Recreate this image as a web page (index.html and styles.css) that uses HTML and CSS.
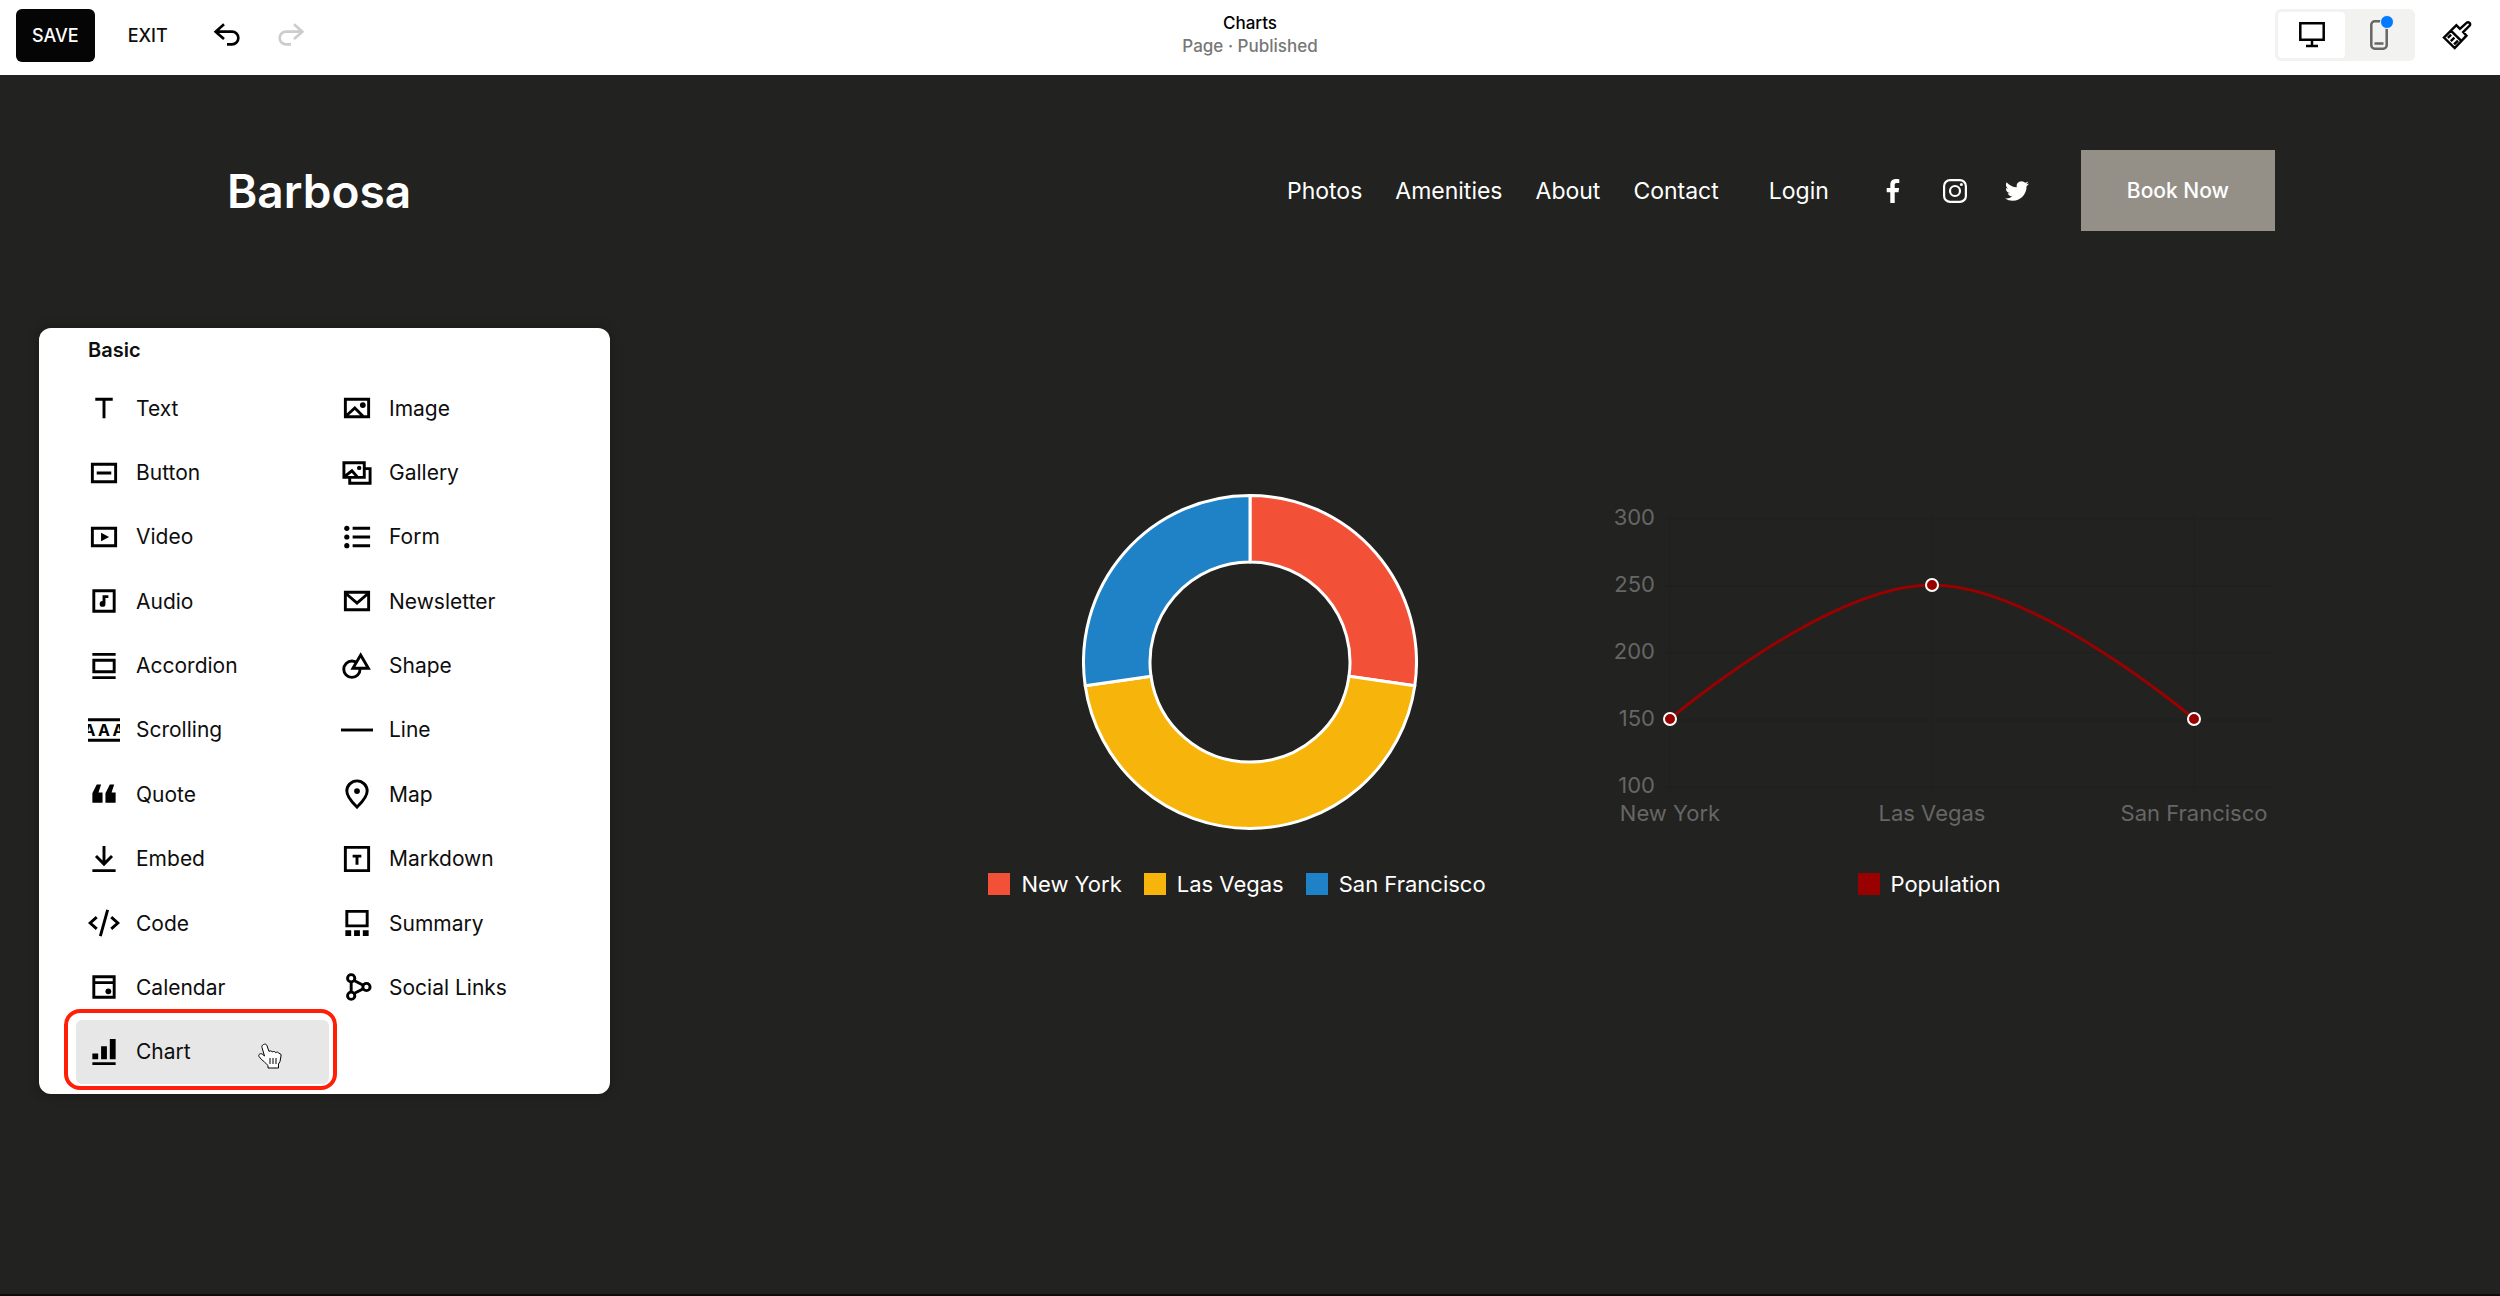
FILE: index.html
```html
<!DOCTYPE html>
<html lang="en">
<head>
    <meta charset="UTF-8">
    <meta name="viewport" content="width=device-width, initial-scale=1.0">
    <title>Charts</title>
    <link rel="stylesheet" href="styles.css">
</head>
<body>
    <div class="toolbar">
        <div class="toolbar-left">
            <button type="button" class="btn-save">SAVE</button>
            <button type="button" class="btn-exit">EXIT</button>
            <button type="button" class="btn-history" aria-label="Undo">
                <svg viewBox="638 70 84 70"><path d="M671 73L646 95L671 117M646 95H695a19 19 0 0 1 0 38H680"/></svg>
            </button>
            <button type="button" class="btn-history" aria-label="Redo" disabled>
                <svg viewBox="638 70 84 70"><path d="M689 73L714 95L689 117M714 95H665a19 19 0 0 0 0 38H680"/></svg>
            </button>
        </div>
        <div class="toolbar-title">
            <strong>Charts</strong>
            <span>Page · Published</span>
        </div>
        <div class="toolbar-right">
            <div class="device-toggle">
                <button type="button" class="device active" aria-label="Desktop view">
                    <svg width="26" height="26" viewBox="0 0 26 26" fill="none" stroke="#000" stroke-width="2.5"><path d="M1.3 1.3H24.7V17.7H1.3ZM13 18V23M7 24H19"/></svg>
                </button>
                <button type="button" class="device" aria-label="Mobile view">
                    <svg width="18" height="30" viewBox="0 0 18 30" fill="none" stroke="#666" stroke-width="2.5"><rect x="1.3" y="1.3" width="15.4" height="27.4" rx="3.5"/><path d="M4.5 23.5H13.5"/></svg>
                    <span class="device-dot"></span>
                </button>
            </div>
            <button type="button" class="btn-styles" aria-label="Site styles">
                <svg width="30" height="30" viewBox="577 61 92 92" fill="none" stroke="#000" stroke-width="7.5"><path d="M583 115L621 77L632 88L653 69a6.5 6.5 0 0 1 9 9L642 98L652 109L616 147ZM605 94L636 125M595 116L605 106M604 126L615 115M614 136L626 124"/></svg>
            </button>
        </div>
    </div>

    <header class="site-header">
        <a href="#" class="site-title">Barbosa</a>
        <nav class="site-nav">
            <a href="#">Photos</a>
            <a href="#">Amenities</a>
            <a href="#">About</a>
            <a href="#">Contact</a>
        </nav>
        <a href="#" class="login">Login</a>
        <div class="social">
            <a href="#" aria-label="Facebook">
                <svg viewBox="0 0 24 24"><path d="M9.3 24V13.2H5.7V8.9H9.3V5.8C9.3 2.1 11.5 0 14.9 0C16.5 0 17.9.1 18.3.2V4H15.9C14 4 13.7 4.9 13.7 6.2V8.9H18.1L17.5 13.2H13.7V24Z"/></svg>
            </a>
            <a href="#" aria-label="Instagram">
                <svg viewBox="0 0 24 24"><g fill="none" stroke="#fff" stroke-width="2.2"><rect x="1.1" y="1.1" width="21.8" height="21.8" rx="6"/><circle cx="12" cy="12" r="5"/></g><circle cx="18.4" cy="5.6" r="1.5"/></svg>
            </a>
            <a href="#" aria-label="Twitter">
                <svg viewBox="0 0 24 24"><path d="M23.95 4.57a10 10 0 0 1-2.82.77 4.96 4.96 0 0 0 2.16-2.72c-.95.55-2 .95-3.13 1.18a4.92 4.92 0 0 0-8.38 4.48C7.69 8.09 4.07 6.13 1.64 3.16a4.82 4.82 0 0 0-.67 2.48c0 1.71.87 3.21 2.19 4.1a4.9 4.9 0 0 1-2.23-.62v.06a4.92 4.92 0 0 0 3.95 4.83 5 5 0 0 1-2.21.08 4.94 4.94 0 0 0 4.6 3.42A9.87 9.87 0 0 1 0 19.54a14 14 0 0 0 7.55 2.21c9.05 0 14-7.5 14-13.98 0-.21 0-.42-.02-.63a9.94 9.94 0 0 0 2.42-2.57z"/></svg>
            </a>
        </div>
        <a href="#" class="book-now">Book Now</a>
    </header>

    <main class="charts">
        <figure class="chart chart-donut">
            <svg class="donut" viewBox="-168 -168 336 336" role="img" aria-label="Population share by city">
                <g stroke="#fff" stroke-width="3" stroke-linejoin="round">
                    <path fill="#f25138" d="M0-166.5A166.5 166.5 0 0 1 164.8 23.7L99 14.2A100 100 0 0 0 0-100Z"/>
                    <path fill="#f7b50c" d="M164.8 23.7A166.5 166.5 0 0 1-164.8 23.7L-99 14.2A100 100 0 0 0 99 14.2Z"/>
                    <path fill="#1f82c6" d="M-164.8 23.7A166.5 166.5 0 0 1 0-166.5V-100A100 100 0 0 0-99 14.2Z"/>
                </g>
            </svg>
            <figcaption class="legend">
                <span class="legend-item red">New York</span>
                <span class="legend-item yellow">Las Vegas</span>
                <span class="legend-item blue">San Francisco</span>
            </figcaption>
        </figure>

        <figure class="chart chart-line">
            <svg class="line" viewBox="0 0 666 336" role="img" aria-label="Population by city">
                <path class="grid" d="M54 25H665M54 92H665M54 159H665M54 226H665M54 293H665M61 20V299M323 20V299M585 20V299"/>
                <g class="tick-y">
                    <text x="46" y="31">300</text>
                    <text x="46" y="98">250</text>
                    <text x="46" y="165">200</text>
                    <text x="46" y="232">150</text>
                    <text x="46" y="299">100</text>
                </g>
                <g class="tick-x">
                    <text x="61" y="327">New York</text>
                    <text x="323" y="327">Las Vegas</text>
                    <text x="585" y="327">San Francisco</text>
                </g>
                <path class="curve" d="M61 225C61 225 218 91 323 91C428 91 585 225 585 225"/>
                <g class="points">
                    <circle cx="61" cy="225" r="6"/>
                    <circle cx="323" cy="91" r="6"/>
                    <circle cx="585" cy="225" r="6"/>
                </g>
            </svg>
            <figcaption class="legend">
                <span class="legend-item dark-red">Population</span>
            </figcaption>
        </figure>
    </main>

    <!-- Block picker -->
    <section class="blocks">
        <h2>Basic</h2>
        <div class="blocks-grid">
            <button type="button" class="block">
                <svg viewBox="0 0 22 22"><path d="M5 5H17M11 5V18"/></svg>Text
            </button>
            <button type="button" class="block">
                <svg viewBox="0 0 22 22"><path d="M3 5H19V17H3ZM4 16L9.5 11L15 16.5"/><circle class="solid" cx="15" cy="9" r="2"/></svg>Image
            </button>
            <button type="button" class="block">
                <svg viewBox="0 0 22 22"><path d="M3 5H19V17H3ZM6 11H16"/></svg>Button
            </button>
            <button type="button" class="block">
                <svg viewBox="0 0 22 22"><path d="M2 4H16V14H2ZM3 13L7.5 9.5L11.5 14M17 8H20V18H6V15"/><circle class="solid" cx="12.5" cy="7.5" r="1.5"/></svg>Gallery
            </button>
            <button type="button" class="block">
                <svg viewBox="0 0 22 22"><path d="M3 5H19V17H3Z"/><path class="solid" d="M9 8L14.5 11L9 14Z"/></svg>Video
            </button>
            <button type="button" class="block">
                <svg viewBox="0 0 22 22"><path d="M8 5H20M8 11H20M8 17H20"/><g class="solid"><circle cx="4" cy="5" r="1.8"/><circle cx="4" cy="11" r="1.8"/><circle cx="4" cy="17" r="1.8"/></g></svg>Form
            </button>
            <button type="button" class="block">
                <svg viewBox="0 0 22 22"><path d="M4 4H18V18H4Z"/><path class="solid" d="M10 7H14V9H12V13A2 2 0 1 1 10 11Z"/></svg>Audio
            </button>
            <button type="button" class="block">
                <svg viewBox="0 0 22 22"><path d="M3 5H19V17H3ZM3 5.5L11 12.5L19 5.5"/></svg>Newsletter
            </button>
            <button type="button" class="block">
                <svg viewBox="0 0 22 22"><path d="M3 3H19M4 7H18V15H4ZM3 19H19"/></svg>Accordion
            </button>
            <button type="button" class="block">
                <svg viewBox="0 0 22 22"><circle cx="7.5" cy="13.2" r="5.6"/><path class="triangle" d="M13.5 3.5L18.8 12.5H8.2Z"/></svg>Shape
            </button>
            <button type="button" class="block">
                <svg viewBox="0 0 22 22"><path d="M0 4H22M0 18H22"/><g class="letters"><text x="1" y="15">A</text><text x="11" y="15">A</text><text x="21" y="15">A</text></g></svg>Scrolling
            </button>
            <button type="button" class="block">
                <svg viewBox="0 0 22 22"><path d="M0 11H22"/></svg>Line
            </button>
            <button type="button" class="block">
                <svg viewBox="0 0 22 22"><path class="solid" d="M6 4.5H9L7.2 10H10V17H3V10.5ZM15 4.5H18L16.2 10H19V17H12V10.5Z"/></svg>Quote
            </button>
            <button type="button" class="block">
                <svg viewBox="0 0 22 22"><path d="M11 20C9 18 4 13.5 4 9A7 7 0 0 1 18 9C18 13.5 13 18 11 20Z"/><circle class="solid" cx="11" cy="9" r="2"/></svg>Map
            </button>
            <button type="button" class="block">
                <svg viewBox="0 0 22 22"><path d="M11 2V15M5.5 9L11 14.5L16.5 9M3 19H19"/></svg>Embed
            </button>
            <button type="button" class="block">
                <svg viewBox="0 0 22 22"><path d="M3 3H19V19H3ZM8 9H14M11 9V15"/></svg>Markdown
            </button>
            <button type="button" class="block">
                <svg viewBox="0 0 22 22"><path d="M6 7L1.5 11L6 15M16 7L20.5 11L16 15M13.5 2L8.5 20"/></svg>Code
            </button>
            <button type="button" class="block">
                <svg viewBox="0 0 22 22"><path d="M4 3H18V13H4Z"/><path class="solid" d="M3 16H7V20H3ZM9 16H13V20H9ZM15 16H19V20H15Z"/></svg>Summary
            </button>
            <button type="button" class="block">
                <svg viewBox="0 0 22 22"><path d="M4 4H18V18H4ZM4 8H18"/><circle class="solid" cx="14" cy="14" r="2"/></svg>Calendar
            </button>
            <button type="button" class="block">
                <svg viewBox="0 0 22 22"><circle cx="7" cy="5" r="2.5"/><circle cx="7" cy="17" r="2.5"/><circle cx="17.5" cy="11" r="2.5"/><path d="M7 7.5V14.5M9 6.5L15.3 9.8M9 15.5L15.3 12.2"/></svg>Social Links
            </button>
            <button type="button" class="block selected">
                <svg viewBox="0 0 22 22"><path class="solid" d="M3 12H7V16H3ZM9 7H13V16H9ZM15 2H19V16H15ZM3 18H19V20H3Z"/></svg>Chart
                <span class="highlight"></span>
                <svg class="cursor" viewBox="0 0 24 26"><path d="M5.5 1.5C7 .7 8.5 1.2 9 2.7L11 8.5C12 7.5 13.7 7.7 14.2 9C15.5 8 17.3 8.5 17.7 9.7C19 8.7 20.5 9 21 10.5C22.5 10.2 23.3 11.5 23 13L22 18.5L20.5 21V25H10V22.5C7.5 20 5.5 18 3.5 16.5L1 13.5C0 11.5 2.5 9.5 4.8 11.5L6.5 13L4 4.5C3.7 3 4.3 2 5.5 1.5Z"/><path d="M12 15V21M15 15V21M18 15V21"/></svg>
            </button>
        </div>
    </section>
</body>
</html>
```
FILE: styles.css
```css
:root {
    --page-bg: #222220;
    --ink: #0e0e0e;
    --tick: #666;
    --dark-red: #990000;
}

* {
    margin: 0;
    padding: 0;
    box-sizing: border-box;
    font-family: Inter, "Liberation Sans", sans-serif;
}

body {
    min-height: 100vh;
    position: relative;
    background: var(--page-bg);
    border-bottom: 2px solid #0c0c0c;
}

a {
    color: white;
    text-decoration: none;
}

button {
    border: none;
    background: none;
    cursor: pointer;
}

svg {
    display: block;
}

/* Editor toolbar */
.toolbar {
    display: grid;
    grid-template-columns: 1fr auto 1fr;
    align-items: center;
    height: 75px;
    padding: 0 16px 5px;
    background: white;
}

.toolbar-left {
    display: flex;
    align-items: center;
}

.btn-save,
.btn-exit {
    height: 53px;
    padding: 0 16px;
    border-radius: 6px;
    font-size: 18px;
    font-weight: 500;
}

.btn-save {
    background: #050505;
    color: white;
}

.btn-exit {
    margin: 0 29px 0 17px;
    color: var(--ink);
}

.btn-history {
    margin-right: 36px;
}

.btn-history svg {
    width: 28px;
    height: 24px;
    fill: none;
    stroke: black;
    stroke-width: 8;
}

.btn-history:disabled svg {
    stroke: #ccc;
}

.toolbar-title {
    text-align: center;
    font-size: 17px;
    line-height: 23px;
}

.toolbar-title strong,
.toolbar-title span {
    display: block;
    font-weight: 500;
}

.toolbar-title span {
    color: #777;
}

.toolbar-right {
    display: flex;
    align-items: center;
    justify-content: flex-end;
    gap: 27px;
    padding-right: 12px;
}

.device-toggle {
    display: flex;
    padding: 3px;
    border-radius: 6px;
    background: #f2f2f1;
}

.device {
    position: relative;
    display: flex;
    align-items: center;
    justify-content: center;
    width: 67px;
    height: 46px;
    border-radius: 4px;
}

.device.active {
    background: white;
}

.device-dot {
    position: absolute;
    top: 3px;
    right: 18px;
    width: 14px;
    height: 14px;
    border: 1px solid #f2f2f1;
    border-radius: 50%;
    background: #007aff;
}

/* Site header */
.site-header {
    display: flex;
    align-items: center;
    width: 82%;
    margin: 0 auto;
    padding: 75px 0;
    font-size: 23px;
}

.site-title {
    margin-right: auto;
    padding-left: 2px;
    font-size: 46px;
    font-weight: 600;
}

.site-nav {
    display: flex;
    gap: 33px;
}

.login {
    margin: 0 52px 0 50px;
}

.social {
    display: flex;
    gap: 38px;
    margin-right: 52px;
}

.social svg {
    width: 24px;
    height: 24px;
    fill: white;
}

.book-now {
    padding: 0 46px;
    background: #949088;
    font-size: 21px;
    font-weight: 500;
    line-height: 81px;
}

/* Charts */
.charts {
    display: grid;
    grid-template-columns: repeat(3, 1fr);
    gap: 26px;
    width: 82%;
    margin: 0 auto;
    padding: 188px 0 60px;
}

.chart-donut {
    grid-column: 2;
}

.donut {
    width: 336px;
    margin: 0 auto;
}

.line {
    width: 100%;
}

.line text {
    font-size: 22px;
    fill: var(--tick);
}

.grid {
    stroke: #1f1f1d;
    stroke-width: 1;
}

.tick-y {
    text-anchor: end;
}

.tick-x {
    text-anchor: middle;
}

.curve {
    fill: none;
    stroke: var(--dark-red);
    stroke-width: 3;
}

.points {
    fill: var(--dark-red);
    stroke: white;
    stroke-width: 2;
}

.legend {
    display: flex;
    justify-content: center;
    gap: 22px;
    margin-top: 39px;
    padding-right: 26px;
    color: white;
    font-size: 22px;
    line-height: 30px;
}

.legend-item {
    display: flex;
    align-items: center;
    gap: 11px;
}

.legend-item::before {
    content: '';
    width: 22px;
    height: 22px;
}

.red::before {
    background: #f25138;
}

.yellow::before {
    background: #f7b50c;
}

.blue::before {
    background: #1f82c6;
}

.dark-red::before {
    background: var(--dark-red);
}

/* Block picker, floats over the page */
.blocks {
    position: absolute;
    top: 328px;
    left: 39px;
    width: 571px;
    padding: 0 28px 10px 37px;
    border-radius: 12px;
    background: white;
    box-shadow: 0 0 12px rgba(0, 0, 0, 0.3);
    color: var(--ink);
}

.blocks h2 {
    margin-bottom: 4px;
    padding-left: 12px;
    font-size: 20px;
    font-weight: 600;
    line-height: 44px;
}

.blocks-grid {
    display: grid;
    grid-template-columns: repeat(2, 1fr);
    grid-template-rows: repeat(11, 1fr);
    height: 708px;
}

.block {
    position: relative;
    display: flex;
    align-items: center;
    gap: 16px;
    padding-left: 12px;
    border-radius: 6px;
    color: var(--ink);
    font-size: 21px;
}

.block svg {
    width: 32px;
    height: 32px;
    fill: none;
    stroke: black;
    stroke-width: 2;
}

.block .solid {
    fill: black;
    stroke: none;
}

.block .triangle {
    fill: white;
}

.letters {
    fill: black;
    stroke: none;
    font-size: 11px;
    font-weight: 700;
    text-anchor: middle;
}

.block.selected {
    background: #e7e7e7;
}

.highlight {
    position: absolute;
    inset: -11px -8px -6px -12px;
    border: 4px solid #ff1f06;
    border-radius: 16px;
}

.block .cursor {
    position: absolute;
    right: 47px;
    bottom: 15px;
    width: 24px;
    height: 26px;
    fill: white;
    stroke-width: 1;
}
```
